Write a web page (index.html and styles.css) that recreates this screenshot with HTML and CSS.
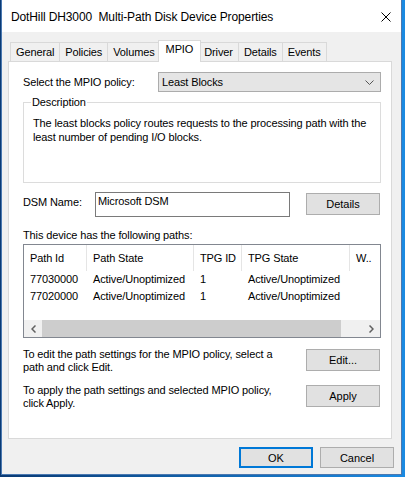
FILE: index.html
```html
<!DOCTYPE html>
<html lang="en">
<head>
    <meta charset="UTF-8">
    <title>DotHill DH3000 Multi-Path Disk Device Properties</title>
    <link rel="stylesheet" href="styles.css">
</head>
<body>
    <div class="window">
        <div class="titlebar">
            <span class="title">DotHill DH3000&nbsp; Multi-Path Disk Device Properties</span>
            <svg class="close" width="10" height="10" viewBox="0 0 10 10">
                <path d="M0.5 0.5 L9.5 9.5 M9.5 0.5 L0.5 9.5" stroke="#000" stroke-width="1" fill="none"/>
            </svg>
        </div>

        <div class="content">
            <div class="tabs">
                <div class="tab">General</div>
                <div class="tab">Policies</div>
                <div class="tab">Volumes</div>
                <div class="tab active">MPIO</div>
                <div class="tab">Driver</div>
                <div class="tab">Details</div>
                <div class="tab">Events</div>
            </div>

            <div class="panel">
                <div class="policy">
                    <label class="policy-label">Select the MPIO policy:</label>
                    <div class="combo">
                        <span>Least Blocks</span>
                        <svg width="9" height="5" viewBox="0 0 9 5">
                            <polyline points="0.5,0.5 4.5,4.5 8.5,0.5" stroke="#555" stroke-width="1" fill="none"/>
                        </svg>
                    </div>
                </div>

                <fieldset class="group">
                    <legend>Description</legend>
                    <p>The least blocks policy routes requests to the processing path with the least number of pending I/O blocks.</p>
                </fieldset>

                <div class="dsm">
                    <label class="dsm-label">DSM Name:</label>
                    <div class="textbox">Microsoft DSM</div>
                    <button class="btn dsm-btn">Details</button>
                </div>

                <div class="paths-label">This device has the following paths:</div>

                <div class="listview">
                    <div class="lv-row lv-head">
                        <div>Path Id</div>
                        <div>Path State</div>
                        <div>TPG ID</div>
                        <div>TPG State</div>
                        <div>W..</div>
                    </div>
                    <div class="lv-body">
                        <div class="lv-row">
                            <div>77030000</div>
                            <div>Active/Unoptimized</div>
                            <div>1</div>
                            <div>Active/Unoptimized</div>
                            <div></div>
                        </div>
                        <div class="lv-row">
                            <div>77020000</div>
                            <div>Active/Unoptimized</div>
                            <div>1</div>
                            <div>Active/Unoptimized</div>
                            <div></div>
                        </div>
                    </div>
                    <div class="hscroll">
                        <div class="arrow">
                            <svg width="5" height="8" viewBox="0 0 5 8">
                                <polyline points="4.5,0.5 1,4 4.5,7.5" stroke="#606060" stroke-width="1.5" fill="none"/>
                            </svg>
                        </div>
                        <div class="track"><div class="thumb"></div></div>
                        <div class="arrow">
                            <svg width="5" height="8" viewBox="0 0 5 8">
                                <polyline points="0.5,0.5 4,4 0.5,7.5" stroke="#606060" stroke-width="1.5" fill="none"/>
                            </svg>
                        </div>
                    </div>
                </div>

                <div class="action">
                    <p>To edit the path settings for the MPIO policy, select a path and click Edit.</p>
                    <button class="btn">Edit...</button>
                </div>
                <div class="action">
                    <p>To apply the path settings and selected MPIO policy, click Apply.</p>
                    <button class="btn">Apply</button>
                </div>
            </div>

            <div class="footer">
                <button class="btn default">OK</button>
                <button class="btn">Cancel</button>
            </div>
        </div>
    </div>
</body>
</html>
```
FILE: styles.css
```css
* { box-sizing: border-box; }
body { margin: 0; height: 477px; overflow: hidden; background: linear-gradient(90deg, #0a3a74, #1a8ae2); font: 11px "Liberation Sans", Arial, sans-serif; letter-spacing: -0.12px; color: #000; }

.window { margin-left: 1px; width: 401px; height: 475px; background: #f0f0f0; border: 1px solid #4a78b0; border-top: none; }
.titlebar { height: 32px; background: #fff; display: flex; align-items: center; padding: 2px 10px 0 9px; font-size: 12px; }
.close { margin-left: auto; }

.content { padding: 8px 0 0 6px; }

.tabs { display: flex; align-items: flex-end; height: 21px; padding-left: 2px; }
.tab { height: 19px; padding: 0 5px; border: 1px solid #d9d9d9; border-bottom: none; margin-left: -1px; line-height: 18px; }
.tab:first-child { margin-left: 0; }
.tab.active { height: 22px; line-height: 17px; padding: 0 7px; margin: 0 -2px -1px -3px; background: #fff; position: relative; z-index: 1; }

.panel { width: 384px; height: 378px; border: 1px solid #d9d9d9; background: #fff; padding: 10px 10px 0 14px; }

.policy { display: flex; align-items: center; height: 20px; }
.policy-label { width: 135px; }
.combo { flex: 1; height: 20px; display: flex; align-items: center; justify-content: space-between; padding: 0 6px 0 3px; background: #e5e5e5; border: 1px solid #acacac; }

.group { margin: 3px 0 0; height: 88px; padding: 0 9px; border: 1px solid #dcdcdc; }
.group legend { padding: 0 1px; margin-left: -2px; line-height: 14px; }
.group p { margin: 7px 0 0; line-height: 14px; }

.dsm { display: flex; align-items: flex-start; margin-top: 9px; }
.dsm-label { width: 72px; padding-top: 3px; line-height: 14px; }
.textbox { width: 195px; height: 25px; border: 1px solid #7a7a7a; padding: 1px 2px; line-height: 14px; }
.dsm-btn { margin: 1px 1px 0 auto; }

.btn { width: 74px; height: 22px; padding: 0; background: #e1e1e1; border: 1px solid #adadad; font: inherit; color: #000; }
.btn.default { border: 2px solid #0078d7; }

.paths-label { margin-top: 11px; line-height: 14px; }

.listview { margin-top: 2px; height: 94px; border: 1px solid #828790; display: flex; flex-direction: column; }
.lv-row { display: grid; grid-template-columns: 63px 107px 48px 108px 1fr; height: 17px; line-height: 17px; white-space: nowrap; }
.lv-row div { padding-left: 6px; overflow: hidden; }
.lv-head { height: 26px; line-height: 26px; }
.lv-head div { border-right: 1px solid #e5e5e5; }
.lv-head div:last-child { border-right: none; }
.lv-body { flex: 1; }

.hscroll { height: 17px; display: flex; background: #f0f0f0; }
.hscroll .arrow { width: 18px; display: flex; align-items: center; justify-content: center; }
.hscroll .track { flex: 1; }
.hscroll .thumb { width: 299px; height: 100%; background: #cdcdcd; }

.action { display: flex; align-items: flex-start; margin-top: 10px; }
.action p { margin: 0; width: 262px; line-height: 13px; }
.action .btn { margin: 1px 1px 0 auto; }

.footer { display: flex; justify-content: flex-end; gap: 7px; margin-top: 8px; padding-right: 7px; }
.footer .btn { height: 21px; }
```
